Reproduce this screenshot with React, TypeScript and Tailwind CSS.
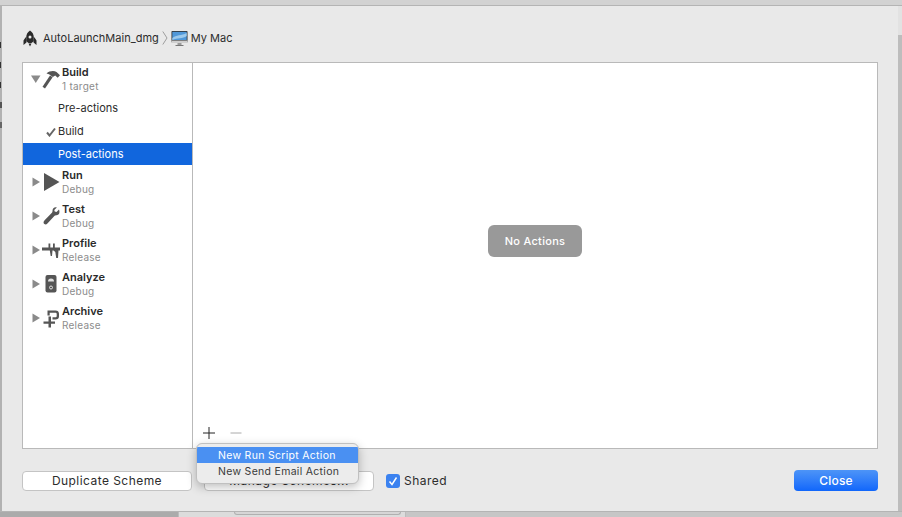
import type { ReactNode } from "react";

const font = { fontFamily: '"Inter", "Liberation Sans", sans-serif' };

function Disclosure({ open }: { open?: boolean }) {
  return (
    <svg width="10" height="10" viewBox="0 0 10 10" className="shrink-0">
      {open ? <path d="M0 1.5h9.5L4.75 9z" fill="#8a8a8a" /> : <path d="M1.5 0.5L9 5l-7.5 4.5z" fill="#8a8a8a" />}
    </svg>
  );
}

const HammerIcon = (
  <svg width="20" height="20" viewBox="0 0 20 20">
    <path d="M1.500 17.800L9 6.500l2.600 1.800L4 19.500z" fill="#555" />
    <path d="M5.500 4.500C8.500 1.800 13 1.500 15.500 3l3.500 3.200-2.300 2.600-2.500-2.200-2.400 1.400-3.400-2.400C7.800 5 6.800 4.700 5.500 4.500z" fill="#555" />
  </svg>
);

const PlayIcon = (
  <svg width="20" height="20" viewBox="0 0 20 20">
    <path d="M3 1L18.500 10 3 19z" fill="#555" />
  </svg>
);

const WrenchIcon = (
  <svg width="20" height="20" viewBox="0 0 20 20">
    <path
      d="M18 3.500l-2.500 2.500-1.800-.4-.4-1.700L15.800 1.500c-2.200-.7-4.500 1-4.300 3.400 0 .8-.2 1.300-.6 1.800L3.600 14.300c-1.700 1.800-1 3.300-.2 3.800 1 .6 2.200.3 3-.6l7.200-7.700c.5-.5 1-.7 1.800-.6 2.300.2 3.900-2.100 2.600-5.700z"
      fill="#555"
    />
  </svg>
);

const CaliperIcon = (
  <svg width="20" height="20" viewBox="0 0 20 20">
    <path d="M1 7.500h6.500V3.500h1.800v4h2.700V3.500h1.800v4H19v3h-1.500l-.5 7.500h-1.800l-.9-6-1.800-1.500h-1l-.5 5.500H9.700L8.800 10.500H7.500V10.500H1z" fill="#555" />
  </svg>
);

const AnalyzeIcon = (
  <svg width="20" height="20" viewBox="0 0 20 20">
    <rect x="4.500" y="1" width="11" height="17.500" rx="2" fill="#555" />
    <path d="M7 7.500a3 3 0 016 0z" fill="#e0e0e0" />
    <circle cx="10" cy="13.500" r="1.500" fill="none" stroke="#e0e0e0" strokeWidth="1" />
  </svg>
);

const ClampIcon = (
  <svg width="20" height="20" viewBox="0 0 20 20">
    <path
      d="M6.500 2.500h8c2.200 0 3.500 1.200 3.500 3.300v2.400c0 2.100-1.300 3.300-3.500 3.300H11.500V9.300h2.800c1 0 1.400-.4 1.400-1.300V6c0-.9-.4-1.300-1.400-1.300H8.700v2.800H6.500z"
      fill="#555"
    />
    <path d="M7.500 8.500h2.500v5H14v2.200h-4V19.500H7.500v-3.800H2.500v-2.200h5z" fill="#555" />
  </svg>
);

function SchemeRow({ icon, title, sub, open, h = "h-[34px]" }: { icon: ReactNode; title: string; sub: string; open?: boolean; h?: string }) {
  return (
    <div className={`flex items-center pl-[8px] ${h}`}>
      <Disclosure open={open} />
      <div className="flex w-[20px] shrink-0 justify-center">{icon}</div>
      <div className="ml-[1px] flex flex-col">
        <span className="text-[11px] leading-[14px] font-semibold text-[#2a2a2a]">{title}</span>
        <span className="text-[10px] leading-[14px] tracking-[0.25px] text-[#8c8c8c]">{sub}</span>
      </div>
    </div>
  );
}

export default function App() {
  return (
    <div className="relative flex h-[517px] w-[902px] flex-col overflow-hidden bg-[#d0d0d0]" style={font}>
      <div className="h-[6px] shrink-0 border-b border-[#b4b4b4] bg-[#d2d2d2]" />
      <div className="flex h-[505px] shrink-0">
        <div className="flex w-[2px] shrink-0 flex-col gap-[14px] bg-[#b2b2b2] pt-[36px]">
          <div className="h-[6px] w-[1px] bg-[#333]" />
          <div className="h-[6px] w-[1px] bg-[#333]" />
          <div className="h-[6px] w-[1px] bg-[#333]" />
          <div className="h-[6px] w-[2px] bg-[#555]" />
          <div className="h-[6px] w-[2px] bg-[#666]" />
        </div>
        <div className="flex w-[896px] shrink-0 flex-col bg-[#e9e9e9] pr-[20px] pl-[20px]">
          <div className="flex h-[56px] shrink-0 items-center pt-[8px] text-[11px] text-[#2c2c2c]">
            <svg width="16" height="17" viewBox="0 0 16 17">
              <path d="M8 0.500c2.600 1.800 3.800 4.200 3.800 6.800v4L9.500 13h-3L4.200 11.300v-4C4.200 4.700 5.400 2.300 8 0.500z" fill="#2a2a2a" />
              <path d="M3.800 7L1.500 10.500v4.500L4.500 12.500zM12.200 7L14.500 10.500v4.500L11.500 12.500z" fill="#2a2a2a" />
              <circle cx="8" cy="7" r="1.500" fill="#e9e9e9" />
              <path d="M6.500 13.500h3L8 16.500z" fill="#2a2a2a" />
            </svg>
            <span className="ml-[5px]">AutoLaunchMain_dmg</span>
            <svg width="6" height="14" viewBox="0 0 6 14" className="mx-[3px]">
              <path d="M0.800 0.500L5 7l-4.200 6.500" fill="none" stroke="#8a8a8a" strokeWidth="0.800" />
            </svg>
            <svg width="17" height="17" viewBox="0 0 17 17">
              <rect x="0.500" y="1" width="16" height="11.500" rx="0.800" fill="#2d2d2d" />
              <rect x="1.300" y="1.800" width="14.400" height="8.200" fill="#4f97d8" />
              <path d="M1.300 8c4-3.500 9-2 14.400-5v3c-4 3-9 1.500-14.400 4z" fill="#9bc9ec" />
              <rect x="0.500" y="10.500" width="16" height="2.500" fill="#cfcfcf" />
              <rect x="6.500" y="13" width="4" height="2.200" fill="#9a9a9a" />
              <rect x="4.500" y="15" width="8" height="1" fill="#777" />
            </svg>
            <span className="ml-[3px]">My Mac</span>
          </div>

          <div className="flex h-[387px] shrink-0 border border-[#b9b9b9] bg-white">
            <div className="w-[170px] shrink-0 border-r border-[#b9b9b9]">
              <SchemeRow icon={HammerIcon} title="Build" sub="1 target" open h="h-[33px] pb-[2px]" />
              <div className="flex h-[24px] items-center pl-[35px] text-[11px] text-[#2c2c2c]">Pre-actions</div>
              <div className="flex h-[23px] items-center pl-[23px] text-[11px] text-[#2c2c2c]">
                <svg width="10" height="10" viewBox="0 0 10 10" className="mr-[2px]">
                  <path d="M1 5.500l2.500 3L9 1.500" fill="none" stroke="#666" strokeWidth="2" />
                </svg>
                Build
              </div>
              <div className="flex h-[22px] items-center bg-[#1166dd] pl-[35px] text-[11px] text-white">Post-actions</div>
              <SchemeRow icon={PlayIcon} title="Run" sub="Debug" />
              <SchemeRow icon={WrenchIcon} title="Test" sub="Debug" />
              <SchemeRow icon={CaliperIcon} title="Profile" sub="Release" />
              <SchemeRow icon={AnalyzeIcon} title="Analyze" sub="Debug" />
              <SchemeRow icon={ClampIcon} title="Archive" sub="Release" />
            </div>
            <div className="flex min-w-0 flex-1 flex-col">
              <div className="flex flex-1 items-center justify-center pb-[8px]">
                <div className="flex h-[32px] w-[94px] items-center justify-center rounded-[6px] bg-[#999999] pt-[2px] text-[11px] font-medium tracking-[0.3px] text-white">
                  No Actions
                </div>
              </div>
              <div className="flex h-[22px] shrink-0 items-start pl-[9px]">
                <svg width="14" height="14" viewBox="0 0 14 14">
                  <path d="M7 1v12M1 7h12" stroke="#222" strokeWidth="1" />
                </svg>
                <svg width="14" height="14" viewBox="0 0 14 14" className="ml-[13px]">
                  <path d="M1.500 7h11" stroke="#aaa" strokeWidth="1" />
                </svg>
              </div>
            </div>
          </div>

          <div className="flex flex-1 items-start pt-[22px]">
            <div className="flex h-[20px] w-[170px] items-center justify-center rounded-[4px] border border-[#c4c4c4] bg-white text-[12px] tracking-[0.45px] text-[#2c2c2c]">
              Duplicate Scheme
            </div>
            <div className="ml-[12px] flex h-[20px] w-[170px] items-center justify-center rounded-[4px] border border-[#c4c4c4] bg-white text-[12px] tracking-[0.45px] text-[#2c2c2c]">
              Manage Schemes...
            </div>
            <div className="ml-[12px] flex h-[20px] items-center">
              <div className="flex h-[14px] w-[14px] items-center justify-center rounded-[3px] bg-[#3b82f0]">
                <svg width="10" height="10" viewBox="0 0 10 10">
                  <path d="M1.500 5.500l2.500 3L8.500 1.500" fill="none" stroke="#fff" strokeWidth="1.400" />
                </svg>
              </div>
              <span className="ml-[4px] text-[12px] tracking-[0.5px] text-[#2c2c2c]">Shared</span>
            </div>
            <div className="-mt-[1px] ml-auto flex h-[21px] w-[84px] items-center justify-center rounded-[4px] bg-gradient-to-b from-[#4d94f7] to-[#0f66fb] text-[12px] font-medium tracking-[0.2px] text-white">
              Close
            </div>
          </div>
        </div>
        <div className="flex w-[4px] shrink-0 flex-col">
          <div className="h-[29px] bg-[#e2e2e2]" />
          <div className="flex-1 bg-[#bdbdbd]" />
        </div>
      </div>
      <div className="flex flex-1 border-t border-[#b4b4b4]">
        <div className="w-[178px] bg-[#ababab]" />
        <div className="w-[228px] border-x border-[#bcbcbc] bg-[#dcdcdc] pl-[55px]">
          <div className="h-[3px] w-[167px] rounded-b-[3px] border-x border-b border-[#b0b0b0] bg-[#d6d6d6]" />
        </div>
        <div className="flex-1 bg-[#c6c6c6]" />
      </div>

      {/* popup menu from the + button */}
      <div className="absolute top-[443px] left-[196px] flex h-[41px] w-[163px] flex-col overflow-hidden rounded-[6px] border border-[#c0c0c0] bg-[#ececec] pt-[3px] text-[10.5px] tracking-[0.3px] shadow-[0_3px_10px_rgba(0,0,0,0.25)]">
        <div className="flex h-[16px] shrink-0 items-center bg-[#4a90f2] pt-[1px] pl-[21px] text-white">New Run Script Action</div>
        <div className="flex h-[16px] shrink-0 items-center pt-[1px] pl-[21px] text-[#3a3a3a]">New Send Email Action</div>
      </div>
    </div>
  );
}
